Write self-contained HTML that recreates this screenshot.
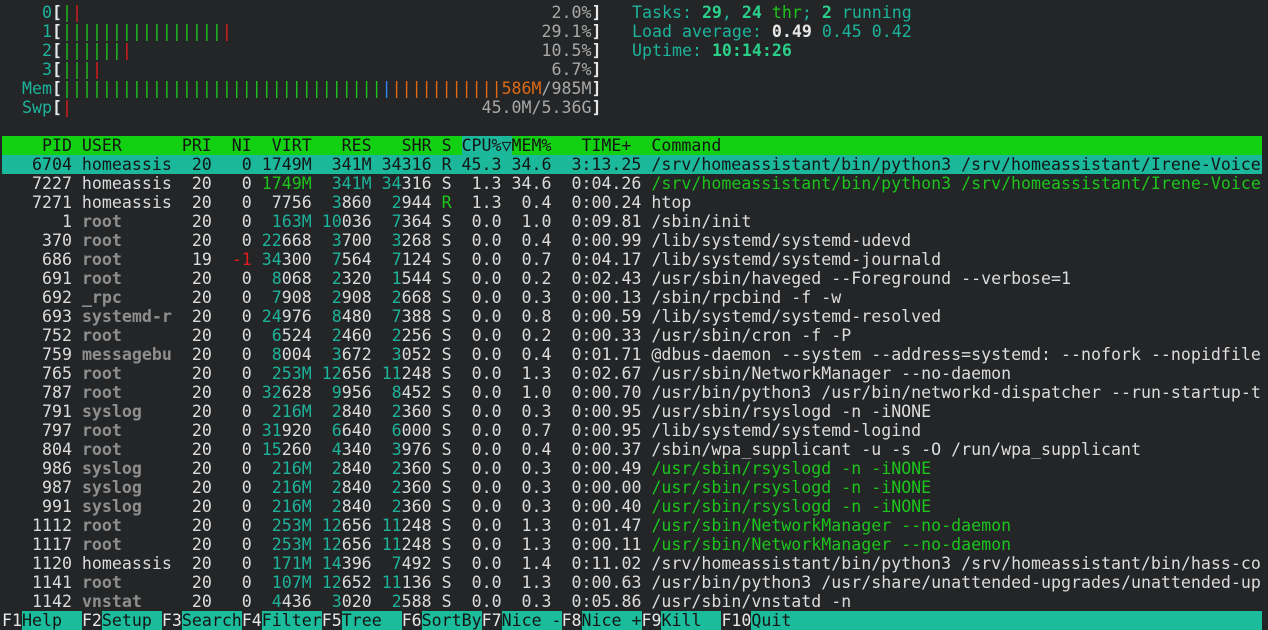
<!DOCTYPE html>
<html><head><meta charset="utf-8"><style>
html,body{margin:0;padding:0;background:#232527;width:1268px;height:630px;overflow:hidden}
body{font-family:"DejaVu Sans Mono","Liberation Mono",monospace;font-size:16.6px;line-height:19px;color:#dcdcdc;position:relative}
.l{position:absolute;left:2px;width:1260px;height:19px;white-space:pre;overflow:hidden}
.t{color:#1db39a}.g{color:#1cc41c}.r{color:#e01c1c}.o{color:#e06a14}.b{color:#2f86f0}.u{color:#8e8e8e;font-weight:bold}
.p{color:#a8a8a8}.w{color:#e8e8e8;font-weight:bold}.tb{color:#2bd08a;font-weight:bold}
.hdr{background:#12d012;color:#151515}.sel{background:#1bb89c;color:#151515}
.fk{color:#e8e8e8}.fl{background:#1bbc9c;color:#151515}
</style></head><body>
<div class="l" style="top:3px">    <span class="t">0</span><span class="w">[</span><span class="g">|</span><span class="r">|</span>                                               <span class="p">2.0%</span><span class="w">]</span></div>
<div class="l" style="top:22px">    <span class="t">1</span><span class="w">[</span><span class="g">||||||||||||||||</span><span class="r">|</span>                               <span class="p">29.1%</span><span class="w">]</span></div>
<div class="l" style="top:41px">    <span class="t">2</span><span class="w">[</span><span class="g">||||||</span><span class="r">|</span>                                         <span class="p">10.5%</span><span class="w">]</span></div>
<div class="l" style="top:60px">    <span class="t">3</span><span class="w">[</span><span class="g">|||</span><span class="r">|</span>                                             <span class="p">6.7%</span><span class="w">]</span></div>
<div class="l" style="top:79px">  <span class="t">Mem</span><span class="w">[</span><span class="g">||||||||||||||||||||||||||||||||</span><span class="b">|</span><span class="o">|||||||||||586M</span><span class="p">/985M</span><span class="w">]</span></div>
<div class="l" style="top:98px">  <span class="t">Swp</span><span class="w">[</span><span class="r">|</span>                                         <span class="p">45.0M/5.36G</span><span class="w">]</span></div>
<div class="l" style="top:3px;left:632px;width:630px"><span class="t">Tasks: </span><span class="tb">29</span><span class="t">, </span><span class="tb">24</span><span class="g"> thr</span><span class="t">; </span><span class="tb">2</span><span class="t"> running</span></div>
<div class="l" style="top:22px;left:632px;width:630px"><span class="t">Load average: </span><span class="w">0.49 </span><span class="t">0.45 </span><span class="t">0.42</span></div>
<div class="l" style="top:41px;left:632px;width:630px"><span class="t">Uptime: </span><span class="tb">10:14:26</span></div>

<div class="l hdr" style="top:136px">    PID USER      PRI  NI  VIRT   RES   SHR S <span style="background:#1bb89c">CPU%▽</span>MEM%   TIME+  Command</div>
<div class="l sel" style="top:155px">   6704 homeassis  20   0 1749M  341M 34316 R 45.3 34.6  3:13.25 /srv/homeassistant/bin/python3 /srv/homeassistant/Irene-Voice</div>
<div class="l" style="top:174px">   7227 homeassis  20   0 <span class="g">1749M</span>  <span class="t">341M</span> <span class="t">34</span>316 S  1.3 34.6  0:04.26 <span class="g">/srv/homeassistant/bin/python3 /srv/homeassistant/Irene-Voice</span></div>
<div class="l" style="top:193px">   7271 homeassis  20   0  7756  <span class="t">3</span>860  <span class="t">2</span>944 <span class="g">R</span>  1.3  0.4  0:00.24 htop</div>
<div class="l" style="top:212px">      1 <span class="u">root     </span>  20   0  <span class="t">163M</span> <span class="t">10</span>036  <span class="t">7</span>364 S  0.0  1.0  0:09.81 /sbin/init</div>
<div class="l" style="top:231px">    370 <span class="u">root     </span>  20   0 <span class="t">22</span>668  <span class="t">3</span>700  <span class="t">3</span>268 S  0.0  0.4  0:00.99 /lib/systemd/systemd-udevd</div>
<div class="l" style="top:250px">    686 <span class="u">root     </span>  19  <span class="r">-1</span> <span class="t">34</span>300  <span class="t">7</span>564  <span class="t">7</span>124 S  0.0  0.7  0:04.17 /lib/systemd/systemd-journald</div>
<div class="l" style="top:269px">    691 <span class="u">root     </span>  20   0  <span class="t">8</span>068  <span class="t">2</span>320  <span class="t">1</span>544 S  0.0  0.2  0:02.43 /usr/sbin/haveged --Foreground --verbose=1</div>
<div class="l" style="top:288px">    692 <span class="u">_rpc     </span>  20   0  <span class="t">7</span>908  <span class="t">2</span>908  <span class="t">2</span>668 S  0.0  0.3  0:00.13 /sbin/rpcbind -f -w</div>
<div class="l" style="top:307px">    693 <span class="u">systemd-r</span>  20   0 <span class="t">24</span>976  <span class="t">8</span>480  <span class="t">7</span>388 S  0.0  0.8  0:00.59 /lib/systemd/systemd-resolved</div>
<div class="l" style="top:326px">    752 <span class="u">root     </span>  20   0  <span class="t">6</span>524  <span class="t">2</span>460  <span class="t">2</span>256 S  0.0  0.2  0:00.33 /usr/sbin/cron -f -P</div>
<div class="l" style="top:345px">    759 <span class="u">messagebu</span>  20   0  <span class="t">8</span>004  <span class="t">3</span>672  <span class="t">3</span>052 S  0.0  0.4  0:01.71 @dbus-daemon --system --address=systemd: --nofork --nopidfile</div>
<div class="l" style="top:364px">    765 <span class="u">root     </span>  20   0  <span class="t">253M</span> <span class="t">12</span>656 <span class="t">11</span>248 S  0.0  1.3  0:02.67 /usr/sbin/NetworkManager --no-daemon</div>
<div class="l" style="top:383px">    787 <span class="u">root     </span>  20   0 <span class="t">32</span>628  <span class="t">9</span>956  <span class="t">8</span>452 S  0.0  1.0  0:00.70 /usr/bin/python3 /usr/bin/networkd-dispatcher --run-startup-t</div>
<div class="l" style="top:402px">    791 <span class="u">syslog   </span>  20   0  <span class="t">216M</span>  <span class="t">2</span>840  <span class="t">2</span>360 S  0.0  0.3  0:00.95 /usr/sbin/rsyslogd -n -iNONE</div>
<div class="l" style="top:421px">    797 <span class="u">root     </span>  20   0 <span class="t">31</span>920  <span class="t">6</span>640  <span class="t">6</span>000 S  0.0  0.7  0:00.95 /lib/systemd/systemd-logind</div>
<div class="l" style="top:440px">    804 <span class="u">root     </span>  20   0 <span class="t">15</span>260  <span class="t">4</span>340  <span class="t">3</span>976 S  0.0  0.4  0:00.37 /sbin/wpa_supplicant -u -s -O /run/wpa_supplicant</div>
<div class="l" style="top:459px">    986 <span class="u">syslog   </span>  20   0  <span class="t">216M</span>  <span class="t">2</span>840  <span class="t">2</span>360 S  0.0  0.3  0:00.49 <span class="g">/usr/sbin/rsyslogd -n -iNONE</span></div>
<div class="l" style="top:478px">    987 <span class="u">syslog   </span>  20   0  <span class="t">216M</span>  <span class="t">2</span>840  <span class="t">2</span>360 S  0.0  0.3  0:00.00 <span class="g">/usr/sbin/rsyslogd -n -iNONE</span></div>
<div class="l" style="top:497px">    991 <span class="u">syslog   </span>  20   0  <span class="t">216M</span>  <span class="t">2</span>840  <span class="t">2</span>360 S  0.0  0.3  0:00.40 <span class="g">/usr/sbin/rsyslogd -n -iNONE</span></div>
<div class="l" style="top:516px">   1112 <span class="u">root     </span>  20   0  <span class="t">253M</span> <span class="t">12</span>656 <span class="t">11</span>248 S  0.0  1.3  0:01.47 <span class="g">/usr/sbin/NetworkManager --no-daemon</span></div>
<div class="l" style="top:535px">   1117 <span class="u">root     </span>  20   0  <span class="t">253M</span> <span class="t">12</span>656 <span class="t">11</span>248 S  0.0  1.3  0:00.11 <span class="g">/usr/sbin/NetworkManager --no-daemon</span></div>
<div class="l" style="top:554px">   1120 homeassis  20   0  <span class="t">171M</span> <span class="t">14</span>396  <span class="t">7</span>492 S  0.0  1.4  0:11.02 /srv/homeassistant/bin/python3 /srv/homeassistant/bin/hass-co</div>
<div class="l" style="top:573px">   1141 <span class="u">root     </span>  20   0  <span class="t">107M</span> <span class="t">12</span>652 <span class="t">11</span>136 S  0.0  1.3  0:00.63 /usr/bin/python3 /usr/share/unattended-upgrades/unattended-up</div>
<div class="l" style="top:592px">   1142 <span class="u">vnstat   </span>  20   0  <span class="t">4</span>436  <span class="t">3</span>020  <span class="t">2</span>588 S  0.0  0.3  0:05.86 /usr/sbin/vnstatd -n</div>
<div class="l" style="top:611px"><span class="fk">F1</span><span class="fl">Help  </span><span class="fk">F2</span><span class="fl">Setup </span><span class="fk">F3</span><span class="fl">Search</span><span class="fk">F4</span><span class="fl">Filter</span><span class="fk">F5</span><span class="fl">Tree  </span><span class="fk">F6</span><span class="fl">SortBy</span><span class="fk">F7</span><span class="fl">Nice -</span><span class="fk">F8</span><span class="fl">Nice +</span><span class="fk">F9</span><span class="fl">Kill  </span><span class="fk">F10</span><span class="fl">Quit                                                                                                                        </span></div>
</body></html>
